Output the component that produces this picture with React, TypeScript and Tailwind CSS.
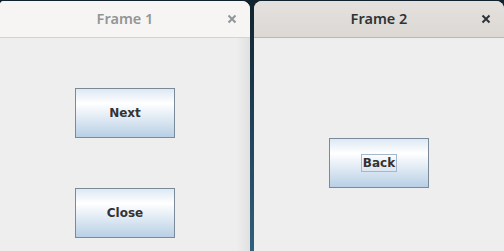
import React from 'react';

const CloseIcon = ({ color }: { color: string }) => (
  <svg width="10" height="10" viewBox="0 0 10 10" className="block">
    <path d="M1.5 1.5 L8.5 8.5 M8.5 1.5 L1.5 8.5" stroke={color} strokeWidth="2" strokeLinecap="butt" />
  </svg>
);

const MetalButton = ({ label, focused = false }: { label: string; focused?: boolean }) => (
  <button
    className="w-[100px] h-[50px] border border-[#7a8a99] flex items-center justify-center bg-[linear-gradient(to_bottom,#dde8f3_0%,#ffffff_30%,#b8cfe5_100%)]"
    style={{ fontFamily: '"DejaVu Sans", sans-serif' }}
  >
    <span
      className={`text-[12px] font-bold text-[#333333] leading-[14px] px-[1px] py-[1px] ${
        focused ? 'outline outline-1 outline-[#a3b8cc]' : ''
      }`}
    >
      {label}
    </span>
  </button>
);

const Window = ({
  title,
  active,
  rounded,
  children,
}: {
  title: string;
  active: boolean;
  rounded: string;
  children: React.ReactNode;
}) => (
  <div className={`relative w-[250px] h-[260px] shrink-0 flex flex-col overflow-hidden bg-[#eeeeee] ${rounded}`}>
    <div
      className={`h-[37px] shrink-0 flex items-center justify-center relative border-b ${
        active
          ? 'bg-[linear-gradient(to_bottom,#e4e1de,#dcd8d4)] border-[#bdb7b1]'
          : 'bg-[#f6f5f4] border-[#d5d3d0]'
      }`}
    >
      <span
        className={`text-[14.5px] font-semibold ${active ? 'text-[#2e3436]' : 'text-[#929595]'}`}
        style={{ fontFamily: '"Noto Sans", sans-serif' }}
      >
        {title}
      </span>
      <div className="absolute right-[13px] top-[13px]">
        <CloseIcon color={active ? '#2e3436' : '#929595'} />
      </div>
    </div>
    {children}
  </div>
);

export default function App() {
  return (
    <div className="w-[504px] h-[251px] overflow-hidden flex gap-[4px] pt-[1px] bg-[linear-gradient(to_bottom,#10222e,#1f4258_50%,#2f607c)]">
      <Window title="Frame 1" active={false} rounded="rounded-tl-[4px] rounded-tr-[8px]">
        <div className="flex flex-col gap-[50px] pl-[75px] pt-[50px]">
          <MetalButton label="Next" />
          <MetalButton label="Close" />
        </div>
        <div className="absolute right-0 top-[37px] bottom-0 w-[14px] bg-[linear-gradient(to_right,rgba(0,0,0,0),rgba(0,0,0,0.06))]" />
      </Window>
      <Window title="Frame 2" active={true} rounded="rounded-tl-[8px] rounded-tr-[8px]">
        <div className="flex flex-col pl-[75px] pt-[100px]">
          <MetalButton label="Back" focused />
        </div>
      </Window>
    </div>
  );
}
